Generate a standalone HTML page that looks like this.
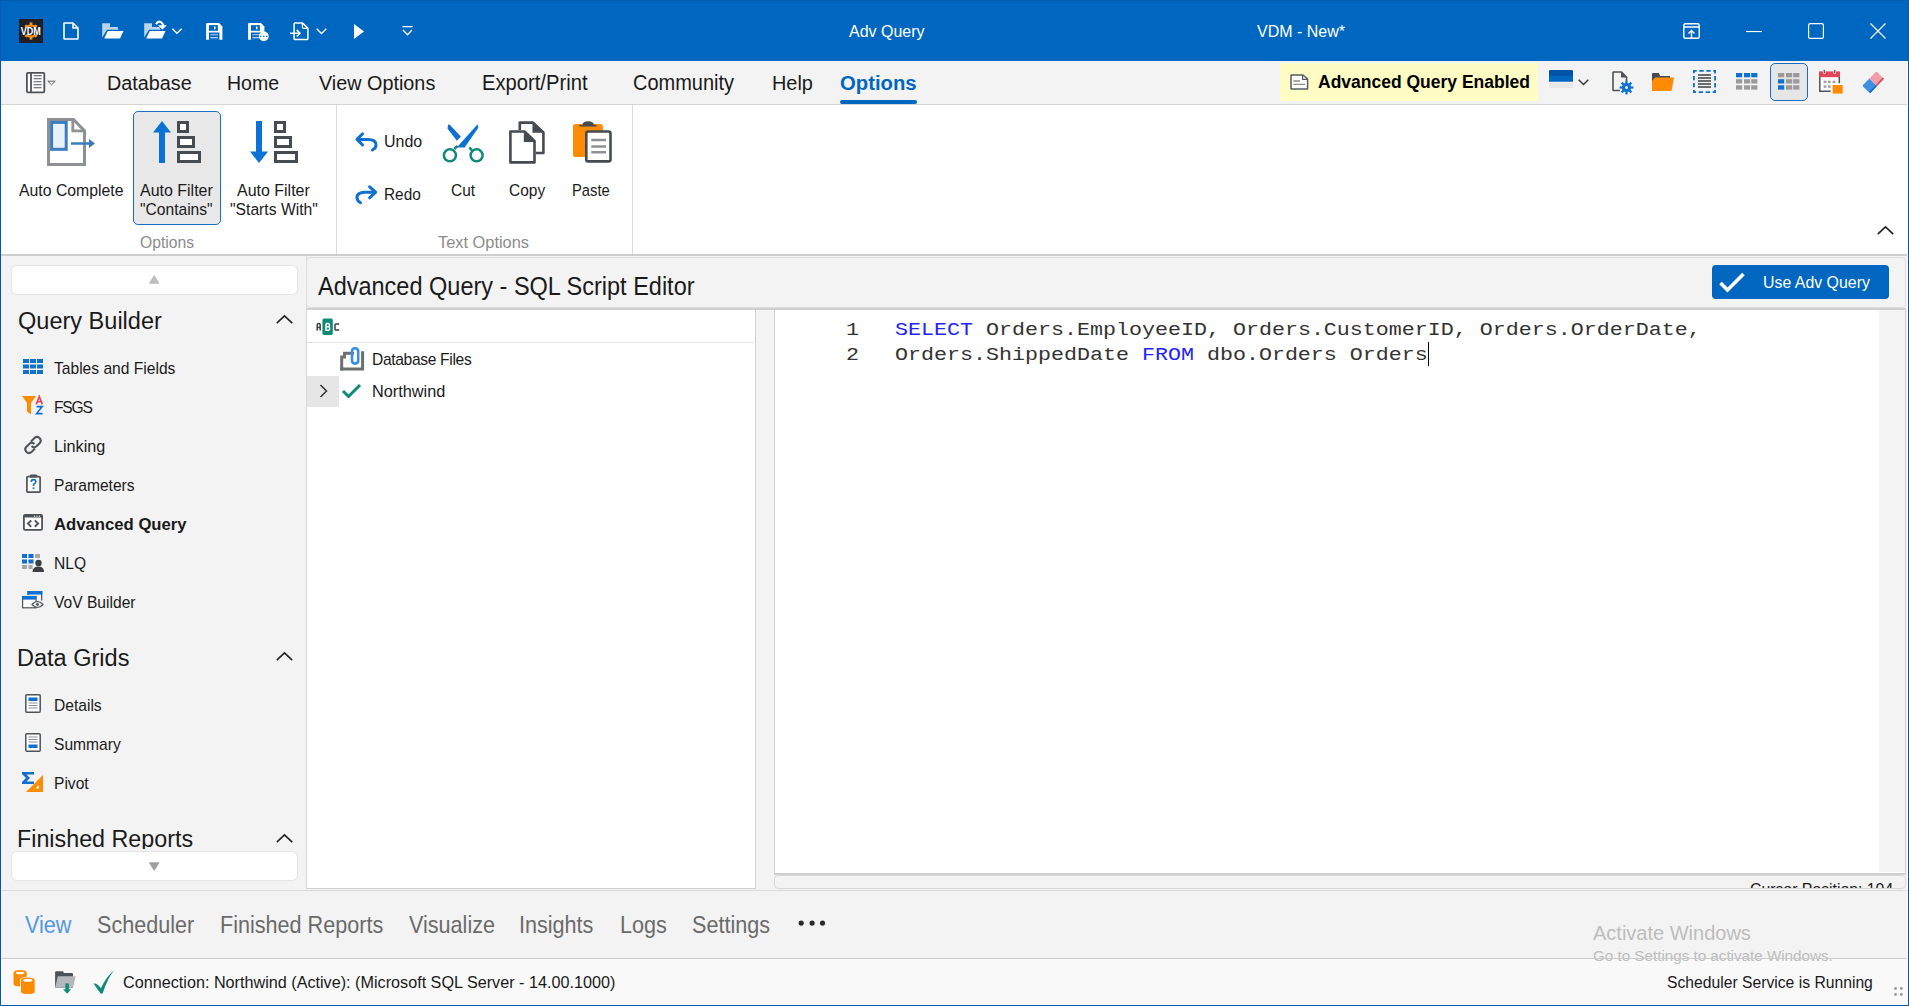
<!DOCTYPE html>
<html><head><meta charset="utf-8">
<style>
*{margin:0;padding:0;box-sizing:border-box}
html,body{width:1909px;height:1006px;overflow:hidden;background:#fff;font-family:"Liberation Sans",sans-serif;color:#1a1a1a}
.a{position:absolute}
.t{position:absolute;white-space:nowrap;line-height:1}
svg{position:absolute;overflow:visible}
#title{left:0;top:0;width:1909px;height:61px;background:#0067c0}
#tabs{left:1px;top:61px;width:1907px;height:44px;background:#f3f3f3;border-bottom:1px solid #d4d4d4}
#ribbon{left:1px;top:105px;width:1907px;height:149px;background:#fff}
#rbot{left:1px;top:254px;width:1907px;height:2px;background:#cfcfcf}
#main{left:1px;top:256px;width:1907px;height:634px;background:#f3f3f3}
#nav{left:1px;top:890px;width:1907px;height:68px;background:#f3f3f3;border-top:1px solid #d9d9d9}
#status{left:1px;top:958px;width:1907px;height:47px;background:#f9f9f9;border-top:1px solid #d9d9d9}
#lb{left:0;top:0;width:1px;height:1006px;background:#005bb0}
#tb{left:0;top:0;width:1909px;height:1px;background:#005bb0}
#rb{left:1908px;top:0;width:1px;height:1006px;background:#005bb0}
#bb{left:0;top:1005px;width:1909px;height:1px;background:#005bb0}
</style></head><body>
<div class="a" id="title"></div>
<div class="a" id="tabs"></div>
<div class="a" id="ribbon"></div>
<div class="a" id="rbot"></div>
<div class="a" id="main"></div>
<div class="a" id="nav"></div>
<div class="a" id="status"></div>

<!-- TITLE BAR -->
<svg style="left:19px;top:19px" width="24" height="24" viewBox="0 0 24 24">
<rect width="24" height="24" fill="#1f1f29"/>
<path d="M6.8 8.2 Q12 4.8 17.2 8.2" fill="none" stroke="#f7931e" stroke-width="2.2"/>
<path d="M6.8 15.8 Q12 19.2 17.2 15.8" fill="none" stroke="#f7931e" stroke-width="2.2"/>
<rect x="10.6" y="3.4" width="2.8" height="3" fill="#f7931e"/><rect x="10.6" y="17.6" width="2.8" height="3" fill="#f7931e"/>
<rect x="6" y="6" width="2.6" height="2.6" fill="#f7931e" transform="rotate(-30 7.3 7.3)"/><rect x="15.4" y="6" width="2.6" height="2.6" fill="#f7931e" transform="rotate(30 16.7 7.3)"/>
<rect x="6" y="15.4" width="2.6" height="2.6" fill="#f7931e" transform="rotate(30 7.3 16.7)"/><rect x="15.4" y="15.4" width="2.6" height="2.6" fill="#f7931e" transform="rotate(-30 16.7 16.7)"/>
<rect x="1" y="8.6" width="22" height="6.8" fill="#1f1f29"/>
<text x="1.8" y="15.7" font-family="Liberation Sans" font-weight="700" font-size="10.2" fill="#fff" textLength="20" lengthAdjust="spacingAndGlyphs">VDM</text>
</svg>
<svg style="left:63px;top:22px" width="16" height="18" viewBox="0 0 16 18"><path d="M1 1.5 Q1 1 1.5 1 H10 L15 6 V16.5 Q15 17 14.5 17 H1.5 Q1 17 1 16.5Z M10 1 V6 H15" fill="none" stroke="#fff" stroke-width="1.6" stroke-linejoin="round"/></svg>
<svg style="left:98px;top:15px" width="30" height="30" viewBox="0 0 30 30"><path d="M4.2 8.3 H12 V12 H19.5 L20.5 14.8 H9 L4.2 22.5Z" fill="#b9d4ee"/><path d="M9.8 16.1 H25.5 L22 23.6 H6.2Z" fill="#fff"/></svg>
<svg style="left:140px;top:15px" width="50" height="30" viewBox="0 0 50 30"><path d="M4.2 8.3 H12 V12 H19.5 L20.5 14.8 H9 L4.2 22.5Z" fill="#b9d4ee"/><path d="M9.8 16.1 H25.5 L22 23.6 H6.2Z" fill="#fff"/><path d="M16 9.2 Q19.5 4 23 9.5 V11" fill="none" stroke="#fff" stroke-width="2.3"/><path d="M17.9 10.3 H26.9 L22.4 14.5Z" fill="#fff"/><path d="M32.4 13.8 L37 18.2 L41.6 13.8" fill="none" stroke="#fff" stroke-width="1.4"/></svg>
<svg style="left:205px;top:23px" width="18" height="17" viewBox="0 0 18 17"><path d="M1.1 1.1 Q1.1 0.1 2.1 0.1 H14 L17.4 3.5 V16.8 H1.1Z" fill="#fff"/><rect x="4" y="2.1" width="8.9" height="5.7" fill="#0067c0"/><rect x="9.1" y="3.3" width="1.4" height="3.1" rx="0.7" fill="#fff"/><rect x="4" y="9.5" width="10.4" height="7.4" fill="#0067c0"/><path d="M5.4 11.7 H12.9 M5.4 14.6 H12.9" stroke="#b9d4ee" stroke-width="1.1"/></svg>
<svg style="left:247px;top:23px" width="24" height="20" viewBox="0 0 24 20"><path d="M1.1 1.1 Q1.1 0.1 2.1 0.1 H14 L17.4 3.5 V16.8 H1.1Z" fill="#fff"/><rect x="4" y="2.1" width="8.9" height="5.7" fill="#0067c0"/><rect x="9.1" y="3.3" width="1.4" height="3.1" rx="0.7" fill="#fff"/><rect x="4" y="9.5" width="10.4" height="7.4" fill="#0067c0"/><path d="M5.4 11.7 H12.9 M5.4 14.6 H12.9" stroke="#b9d4ee" stroke-width="1.1"/><circle cx="16.8" cy="13.3" r="4.9" fill="#fff"/><circle cx="13.8" cy="13.3" r="0.8" fill="#0067c0"/><circle cx="16.8" cy="13.3" r="0.8" fill="#0067c0"/><circle cx="19.8" cy="13.3" r="0.8" fill="#0067c0"/></svg>
<svg style="left:290px;top:22px" width="19" height="19" viewBox="0 0 19 19"><path d="M4.1 2 Q4.1 1 5 1 H12.6 L17.9 6.3 V16.8 Q17.9 17.6 17 17.6 H5 Q4.1 17.6 4.1 16.8Z" fill="none" stroke="#fff" stroke-width="1.5" stroke-linejoin="round"/><path d="M12.4 1.2 V5 Q12.4 6.4 13.8 6.4 H17.8" fill="none" stroke="#fff" stroke-width="1.2"/><path d="M0 11.2 H9.8 M6.7 7.9 L10 11.2 L6.7 14.6" fill="none" stroke="#fff" stroke-width="1.5"/></svg>
<svg style="left:316px;top:28px" width="11" height="7" viewBox="0 0 11 7"><path d="M0.7 0.7 L5.5 5.5 L10.3 0.7" fill="none" stroke="#fff" stroke-width="1.4"/></svg>
<svg style="left:354px;top:24px" width="10" height="15" viewBox="0 0 10 15"><path d="M0 0 L10 7.5 L0 15Z" fill="#fff"/></svg>
<svg style="left:402px;top:26px" width="11" height="10" viewBox="0 0 11 10"><path d="M0.5 0.7 H10.5 M1 4 L5.5 8.7 L10 4" fill="none" stroke="#fff" stroke-width="1.3"/></svg>
<div class="t" style="left:849px;top:24.2px;font-size:16.96px;color:#fff;transform:scaleX(0.9434);transform-origin:0 0;">Adv Query</div>
<div class="t" style="left:1257px;top:24.2px;font-size:16.96px;color:#fff;transform:scaleX(0.9434);transform-origin:0 0;">VDM - New*</div>
<svg style="left:1683px;top:23px" width="17" height="16" viewBox="0 0 17 16"><rect x="0.8" y="0.8" width="15.4" height="14.4" rx="1.5" fill="none" stroke="#fff" stroke-width="1.4"/><path d="M0.8 4 H16.2 M8.5 15 V8 M5.5 10.5 L8.5 7.5 L11.5 10.5" fill="none" stroke="#fff" stroke-width="1.4"/></svg>
<svg style="left:1746px;top:31px" width="16" height="2" viewBox="0 0 16 2"><rect width="16" height="1.1" y="0" fill="#fff"/></svg>
<svg style="left:1808px;top:23px" width="16" height="16" viewBox="0 0 16 16"><rect x="0.6" y="0.6" width="14.8" height="14.8" rx="1.6" fill="none" stroke="#fff" stroke-width="1.2"/></svg>
<svg style="left:1870px;top:23px" width="16" height="16" viewBox="0 0 16 16"><path d="M0.5 0.5 L15.5 15.5 M15.5 0.5 L0.5 15.5" stroke="#fff" stroke-width="1.2"/></svg>

<!-- TABS -->
<svg style="left:26px;top:72px" width="30" height="22" viewBox="0 0 30 22"><rect x="0.9" y="0.9" width="17.4" height="19.4" rx="1" fill="#fff" stroke="#4d5357" stroke-width="1.8"/><path d="M5 1 V20.3" stroke="#4d5357" stroke-width="1.8"/><path d="M7.6 3.8 H15.6 M7.6 6.8 H15.6 M7.6 9.8 H15.6 M7.6 12.8 H15.6 M7.6 15.8 H15.6" stroke="#4d5357" stroke-width="1.1"/><path d="M21.8 9.2 H29.2 L25.5 12.8Z" fill="none" stroke="#555" stroke-width="0.9" stroke-linejoin="round"/></svg>
<div class="t" style="left:107px;top:71.99px;font-size:20.99px;transform:scaleX(0.9434);transform-origin:0 0;">Database</div>
<div class="t" style="left:227px;top:72.7px;font-size:20.67px;transform:scaleX(0.9434);transform-origin:0 0;">Home</div>
<div class="t" style="left:319px;top:71.99px;font-size:20.99px;transform:scaleX(0.9434);transform-origin:0 0;">View Options</div>
<div class="t" style="left:482px;top:72.7px;font-size:21.41px;transform:scaleX(0.9434);transform-origin:0 0;">Export/Print</div>
<div class="t" style="left:633px;top:71.98px;font-size:21.20px;transform:scaleX(0.9434);transform-origin:0 0;">Community</div>
<div class="t" style="left:772px;top:71.99px;font-size:21.09px;transform:scaleX(0.9434);transform-origin:0 0;">Help</div>
<div class="t" style="left:840px;top:73px;font-size:20.3px;font-weight:700;color:#0067c0">Options</div>
<div class="a" style="left:840px;top:100px;width:77px;height:3.5px;border-radius:2px;background:#0067c0"></div>

<!-- TABS RIGHT -->
<div class="a" style="left:1280px;top:63px;width:258px;height:38px;background:#fffcc4"></div>
<svg style="left:1290px;top:74px" width="19" height="16" viewBox="0 0 19 16"><path d="M1 1.5 Q1 1 1.5 1 H13 L17.6 5 V14.5 Q17.6 15 17.1 15 H1.5 Q1 15 1 14.5Z" fill="#fff" stroke="#555b5f" stroke-width="1.5" stroke-linejoin="round"/><path d="M12.6 1.2 V5.4 H17.4" fill="none" stroke="#555b5f" stroke-width="1.2"/><path d="M3.3 7 H10 M3.3 10.3 H15" stroke="#8a8f92" stroke-width="1.3"/></svg>
<div class="t" style="left:1318px;top:74.00px;font-size:17.5px;font-weight:700;color:#000">Advanced Query Enabled</div>
<svg style="left:1549px;top:70px" width="24" height="18" viewBox="0 0 24 18"><path d="M0 1.5 Q0 0 1.5 0 H22.5 Q24 0 24 1.5 V11.8 H0Z" fill="#0067c0"/><path d="M0 1.5 Q0 0 1.5 0 H22.5 Q24 0 24 1.5 V5.8 H0Z" fill="#0054a6"/><rect y="13" width="24" height="5" fill="#e8e8e8"/></svg>
<svg style="left:1578px;top:79px" width="11" height="7" viewBox="0 0 11 7"><path d="M0.7 0.7 L5.5 5.5 L10.3 0.7" fill="none" stroke="#333" stroke-width="1.4"/></svg>
<svg style="left:1612px;top:71px" width="21" height="23" viewBox="0 0 21 23"><path d="M8 19.5 H1.5 Q1 19.5 1 19 V1.5 Q1 1 1.5 1 H9.5 L14.5 6 V10" fill="none" stroke="#4d5357" stroke-width="1.6" stroke-linejoin="round"/><path d="M9 1 V6.5 H14.5Z" fill="#4d5357"/><rect x="13.4" y="9.6" width="2.2" height="13.8" fill="#0e70d0" transform="rotate(0 14.5 16.5)"/><rect x="13.4" y="9.6" width="2.2" height="13.8" fill="#0e70d0" transform="rotate(45 14.5 16.5)"/><rect x="13.4" y="9.6" width="2.2" height="13.8" fill="#0e70d0" transform="rotate(90 14.5 16.5)"/><rect x="13.4" y="9.6" width="2.2" height="13.8" fill="#0e70d0" transform="rotate(135 14.5 16.5)"/><circle cx="14.5" cy="16.5" r="4.6" fill="#0e70d0"/><circle cx="14.5" cy="16.5" r="1.5" fill="#f3f3f3"/></svg>
<svg style="left:1652px;top:73px" width="22" height="18" viewBox="0 0 22 18"><path d="M0 1 Q0 0 1 0 H7 L8 3 H18 V8 H0Z" fill="#454b50"/><path d="M3 4.5 H22 L19.5 18 H0 V8Z" fill="#ff8c00"/></svg>
<svg style="left:1693px;top:70px" width="23" height="23" viewBox="0 0 23 23"><rect x="0.9" y="0.9" width="21.2" height="21.2" fill="none" stroke="#0e70d0" stroke-width="1.8" stroke-dasharray="4.4 2.6" stroke-dashoffset="1.6"/><path d="M5 5 H18 M5 8 H18 M5 11 H18 M5 14 H18 M5 17 H18" stroke="#3a4045" stroke-width="1.5"/></svg>
<svg style="left:1736px;top:73px" width="22" height="17" viewBox="0 0 22 17"><rect x="0" y="0" width="6.2" height="4.3" fill="#0e70d0"/><rect x="8" y="0" width="6.2" height="4.3" fill="#0e70d0"/><rect x="15.2" y="0" width="6.2" height="4.3" fill="#0e70d0"/><rect x="0" y="6.2" width="6.2" height="4.3" fill="#9a9a9a"/><rect x="8" y="6.2" width="6.2" height="4.3" fill="#9a9a9a"/><rect x="15.2" y="6.2" width="6.2" height="4.3" fill="#9a9a9a"/><rect x="0" y="12.3" width="6.2" height="4.3" fill="#9a9a9a"/><rect x="8" y="12.3" width="6.2" height="4.3" fill="#9a9a9a"/><rect x="15.2" y="12.3" width="6.2" height="4.3" fill="#9a9a9a"/></svg>
<div class="a" style="left:1770px;top:63px;width:38px;height:38px;border:1.5px solid #1a6fc4;border-radius:5px;background:#e6e6e6"></div>
<svg style="left:1778px;top:73px" width="22" height="17" viewBox="0 0 22 17"><rect x="0" y="0" width="6.2" height="4.3" fill="#9a9a9a"/><rect x="8" y="0" width="6.2" height="4.3" fill="#9a9a9a"/><rect x="15.2" y="0" width="6.2" height="4.3" fill="#9a9a9a"/><rect x="0" y="6.2" width="6.2" height="4.3" fill="#0e70d0"/><rect x="8" y="6.2" width="6.2" height="4.3" fill="#9a9a9a"/><rect x="15.2" y="6.2" width="6.2" height="4.3" fill="#9a9a9a"/><rect x="0" y="12.3" width="6.2" height="4.3" fill="#0e70d0"/><rect x="8" y="12.3" width="6.2" height="4.3" fill="#9a9a9a"/><rect x="15.2" y="12.3" width="6.2" height="4.3" fill="#9a9a9a"/></svg>
<svg style="left:1819px;top:70px" width="25" height="24" viewBox="0 0 25 24"><rect x="0.8" y="7" width="19.5" height="14.3" fill="#fff"/><path d="M0.8 7 V21.2 H11.6 M20.3 7 V13.2" fill="none" stroke="#4d5357" stroke-width="1.5"/><rect x="0" y="1.4" width="21" height="5.8" fill="#e0455a"/><rect x="4" y="0" width="2.4" height="3.6" fill="#fff"/><rect x="14.5" y="0" width="2.4" height="3.6" fill="#fff"/><rect x="4.6" y="-0.2" width="1.3" height="3.3" fill="#4d5357"/><rect x="15.1" y="-0.2" width="1.3" height="3.3" fill="#4d5357"/><g fill="#a0a0a0"><rect x="4.6" y="10.7" width="2.8" height="2.4"/><rect x="8.9" y="10.7" width="2.8" height="2.4"/><rect x="13.6" y="10.7" width="2.8" height="2.4"/><rect x="4.6" y="15.4" width="2.8" height="2.4"/><rect x="8.9" y="15.4" width="2.8" height="2.4"/></g><rect x="12.8" y="14.2" width="11" height="9.4" fill="#fff"/><rect x="13.6" y="15" width="10.1" height="8.6" fill="#ff8c00"/></svg>
<svg style="left:1862px;top:71px" width="23" height="23" viewBox="0 0 23 23"><path d="M1 14 Q0.3 14.7 1 15.4 L7.4 21.8 Q8.1 22.5 8.8 21.8 L15 15.1 L7.4 7.5Z" fill="#3d8fe0"/><path d="M7.4 7.5 L13.8 1 Q14.5 0.3 15.2 1 L21.4 7.2 Q22.1 7.9 21.4 8.6 L15 15.1Z" fill="#f0a0a8"/><path d="M22 7.8 L15 15.1 L13.8 13.9 L20.8 6.6Z" fill="#e0455a"/><path d="M15 15.1 L8.4 22 L7.2 20.8 L13.8 13.9Z" fill="#1a6fc4"/></svg>

<!-- RIBBON -->
<svg style="left:47px;top:118px" width="49" height="48" viewBox="0 0 49 48"><path d="M1.5 1.5 H26.5 L37.5 12.8 V46.5 H1.5Z" fill="#fff" stroke="#8d9194" stroke-width="3"/><path d="M25.8 1.5 V12.8 H37.5" fill="none" stroke="#8d9194" stroke-width="2.8"/><rect x="4.6" y="4.4" width="14.6" height="26.9" fill="#eaf1fb" stroke="#3b7bc0" stroke-width="3"/><path d="M24 25.5 H43" stroke="#3b7bc0" stroke-width="2.5"/><path d="M42 21 L48 25.5 L42 30Z" fill="#3b7bc0"/></svg>
<div class="t" style="left:19px;top:183.20px;font-size:16.75px;transform:scaleX(0.9434);transform-origin:0 0;">Auto Complete</div>
<div class="a" style="left:133px;top:111px;width:88px;height:114px;border:1.5px solid #1a6fc4;border-radius:5px;background:#e8e8e8"></div>
<svg style="left:153px;top:121px" width="49" height="42" viewBox="0 0 49 42"><path d="M9 0 L18 11.5 H12 V42 H6 V11.5 H0Z" fill="#0a72d4"/><rect x="25.5" y="1.5" width="9" height="9" fill="#fff" stroke="#454b50" stroke-width="3"/><rect x="25.5" y="16.5" width="15" height="9" fill="#fff" stroke="#454b50" stroke-width="3"/><rect x="25.5" y="31.5" width="21" height="9" fill="#fff" stroke="#454b50" stroke-width="3"/></svg>
<div class="t" style="left:140px;top:183.19px;font-size:16.96px;transform:scaleX(0.9434);transform-origin:0 0;">Auto Filter</div>
<div class="t" style="left:140px;top:202.21px;font-size:16.54px;transform:scaleX(0.9434);transform-origin:0 0;">"Contains"</div>
<svg style="left:250px;top:121px" width="49" height="42" viewBox="0 0 49 42"><path d="M9 42 L18 30.5 H12 V0 H6 V30.5 H0Z" fill="#0a72d4"/><rect x="25.5" y="1.5" width="9" height="9" fill="#fff" stroke="#454b50" stroke-width="3"/><rect x="25.5" y="16.5" width="15" height="9" fill="#fff" stroke="#454b50" stroke-width="3"/><rect x="25.5" y="31.5" width="21" height="9" fill="#fff" stroke="#454b50" stroke-width="3"/></svg>
<div class="t" style="left:237px;top:183.19px;font-size:16.96px;transform:scaleX(0.9434);transform-origin:0 0;">Auto Filter</div>
<div class="t" style="left:230px;top:202.20px;font-size:16.64px;transform:scaleX(0.9434);transform-origin:0 0;">"Starts With"</div>
<div class="t" style="left:140px;top:235.20px;font-size:16.64px;color:#8c8c8c;transform:scaleX(0.9434);transform-origin:0 0;">Options</div>
<div class="a" style="left:336px;top:105px;width:1px;height:149px;background:#dadada"></div>
<svg style="left:355px;top:132px" width="23" height="20" viewBox="0 0 23 20"><path d="M3 7.4 H13 Q21 7.4 21 13 Q21 16.2 17.5 18" fill="none" stroke="#0e70d0" stroke-width="3" stroke-linecap="round"/><path d="M7.6 1.8 L2 7.4 L7.6 13" fill="none" stroke="#0e70d0" stroke-width="3" stroke-linecap="round" stroke-linejoin="round"/></svg>
<div class="t" style="left:384px;top:134.19px;font-size:16.96px;transform:scaleX(0.9434);transform-origin:0 0;">Undo</div>
<svg style="left:355px;top:185px" width="23" height="20" viewBox="0 0 23 20"><path d="M20 7.2 H10 Q2 7.2 2 12.5 Q2 15.8 5.5 17.8" fill="none" stroke="#0e70d0" stroke-width="3" stroke-linecap="round"/><path d="M14.6 1.8 L20.6 7.2 L14.6 12.8" fill="none" stroke="#0e70d0" stroke-width="3" stroke-linecap="round" stroke-linejoin="round"/></svg>
<div class="t" style="left:384px;top:186.22px;font-size:16.32px;transform:scaleX(0.9434);transform-origin:0 0;">Redo</div>
<svg style="left:442px;top:124px" width="43" height="40" viewBox="0 0 43 40"><path d="M5.8 2 Q6.3 0.2 7.5 0.6 L18.9 12.5 L14.9 16.7 L5.6 4.8Z" fill="#0e70d0"/><path d="M35.4 0.4 Q36.6 1.8 36.2 4.1 L22.6 23.5 H14.7Z" fill="#0e70d0"/><path d="M12.2 25 L15.6 21.8 M27.3 23.3 L30 26.3" stroke="#0e8a77" stroke-width="2.5"/><circle cx="7.9" cy="31.3" r="6" fill="none" stroke="#0e8a77" stroke-width="2.5"/><circle cx="34.6" cy="31.3" r="6" fill="none" stroke="#0e8a77" stroke-width="2.5"/></svg>
<div class="t" style="left:451px;top:182.21px;font-size:16.43px;transform:scaleX(0.9434);transform-origin:0 0;">Cut</div>
<svg style="left:509px;top:120px" width="37" height="44" viewBox="0 0 37 44"><path d="M10.8 10 V2.6 H24 L34.4 12.5 V33 H27" fill="#fff" stroke="#454b50" stroke-width="2.6" stroke-linejoin="round"/><path d="M23.5 1.5 V12.8 H35.5Z" fill="#454b50"/><path d="M1.4 11.5 H15.5 L25.5 21 V42.4 H1.4Z" fill="#fff" stroke="#454b50" stroke-width="2.6" stroke-linejoin="round"/><path d="M14.8 10.5 V22 H26.5Z" fill="#454b50"/></svg>
<div class="t" style="left:509px;top:182.21px;font-size:16.43px;transform:scaleX(0.9434);transform-origin:0 0;">Copy</div>
<svg style="left:572px;top:120px" width="41" height="44" viewBox="0 0 41 44"><rect x="1" y="3.9" width="29.9" height="33" rx="2.5" fill="#ff8c00"/><path d="M7.3 6.5 H24.6 V5 H22 Q21.5 1.3 16.2 1.3 Q10.9 1.3 10.4 5 H7.3Z" fill="#454b50"/><rect x="14.3" y="11.5" width="24.2" height="29.9" rx="2" fill="#fff" stroke="#454b50" stroke-width="2.6"/><path d="M19.3 20.1 H34 M19.3 26.4 H34 M19.3 32.2 H34" stroke="#8d9194" stroke-width="2.5"/></svg>
<div class="t" style="left:572px;top:181.6px;font-size:16.43px;transform:scaleX(0.90);transform-origin:0 0;">Paste</div>
<div class="t" style="left:438px;top:235.19px;font-size:16.96px;color:#8c8c8c;transform:scaleX(0.9665);transform-origin:0 0;">Text Options</div>
<div class="a" style="left:632px;top:105px;width:1px;height:149px;background:#dadada"></div>
<svg style="left:1877px;top:226px" width="17" height="9" viewBox="0 0 17 9"><path d="M0.8 8.2 L8.5 0.8 L16.2 8.2" fill="none" stroke="#222" stroke-width="1.6"/></svg>
<!-- LEFT PANEL -->
<div class="a" style="left:306px;top:256px;width:1px;height:633px;background:#d9d9d9"></div>
<div class="a" style="left:12px;top:266px;width:285px;height:28px;background:#fff;border-radius:5px;box-shadow:0 0 0 1px #e6e6e6"></div>
<svg style="left:149px;top:275px" width="11" height="9" viewBox="0 0 11 9"><path d="M5.2 1 L9.6 8 H0.8Z" fill="#bdbdbd" stroke="#bdbdbd" stroke-width="1.3" stroke-linejoin="round"/></svg>
<div class="t" style="left:18px;top:308.72px;font-size:24.70px;transform:scaleX(0.953);transform-origin:0 0;">Query Builder</div>
<svg style="left:276px;top:315px" width="17" height="9" viewBox="0 0 17 9"><path d="M0.8 8.2 L8.5 0.8 L16.2 8.2" fill="none" stroke="#222" stroke-width="1.6"/></svg>
<div class="t" style="left:54px;top:361.41px;font-size:16.54px;transform:scaleX(0.9434);transform-origin:0 0;">Tables and Fields</div>
<div class="t" style="left:54px;top:399.81px;font-size:16.54px;letter-spacing:-1.3px;transform:scaleX(0.9434);transform-origin:0 0;">FSGS</div>
<div class="t" style="left:54px;top:437.78px;font-size:17.17px;transform:scaleX(0.9434);transform-origin:0 0;">Linking</div>
<div class="t" style="left:54px;top:477.61px;font-size:16.54px;transform:scaleX(0.9434);transform-origin:0 0;">Parameters</div>
<div class="t" style="left:54px;top:517.20px;font-size:16.7px;font-weight:700;">Advanced Query</div>
<div class="t" style="left:54px;top:556.11px;font-size:16.54px;transform:scaleX(0.9434);transform-origin:0 0;">NLQ</div>
<div class="t" style="left:54px;top:594.91px;font-size:16.54px;transform:scaleX(0.9434);transform-origin:0 0;">VoV Builder</div>
<div class="t" style="left:17px;top:645.52px;font-size:24.70px;transform:scaleX(0.953);transform-origin:0 0;">Data Grids</div>
<svg style="left:276px;top:652px" width="17" height="9" viewBox="0 0 17 9"><path d="M0.8 8.2 L8.5 0.8 L16.2 8.2" fill="none" stroke="#222" stroke-width="1.6"/></svg>
<div class="t" style="left:54px;top:698.41px;font-size:16.54px;transform:scaleX(0.9434);transform-origin:0 0;">Details</div>
<div class="t" style="left:54px;top:737.41px;font-size:16.54px;transform:scaleX(0.9434);transform-origin:0 0;">Summary</div>
<div class="t" style="left:54px;top:776.41px;font-size:16.54px;transform:scaleX(0.9434);transform-origin:0 0;">Pivot</div>
<div class="a" style="left:0;top:820px;width:306px;height:29px;overflow:hidden"><div class="t" style="left:17px;top:6.72px;font-size:24.70px;transform:scaleX(0.9434);transform-origin:0 0;">Finished Reports</div>
<svg style="left:276px;top:14px" width="17" height="9" viewBox="0 0 17 9"><path d="M0.8 8.2 L8.5 0.8 L16.2 8.2" fill="none" stroke="#222" stroke-width="1.6"/></svg>
</div>
<div class="a" style="left:12px;top:852px;width:285px;height:28px;background:#fff;border-radius:5px;box-shadow:0 0 0 1px #e6e6e6"></div>
<svg style="left:149px;top:862px" width="11" height="9" viewBox="0 0 11 9"><path d="M0.8 1 H9.6 L5.2 8Z" fill="#a0a0a0" stroke="#a0a0a0" stroke-width="1.3" stroke-linejoin="round"/></svg>
<svg style="left:23px;top:359px" width="20" height="15" viewBox="0 0 20 15"><g fill="#0e70d0"><rect x="0" y="0" width="6" height="4"/><rect x="7" y="0" width="6" height="4"/><rect x="14" y="0" width="6" height="4"/><rect x="0" y="5.5" width="6" height="4"/><rect x="7" y="5.5" width="6" height="4"/><rect x="14" y="5.5" width="6" height="4"/><rect x="0" y="11" width="6" height="4"/><rect x="7" y="11" width="6" height="4"/><rect x="14" y="11" width="6" height="4"/></g></svg>
<svg style="left:22px;top:396px" width="22" height="19" viewBox="0 0 22 19"><path d="M0 0 H14 L9 7 V18.5 L5 15.5 V7Z" fill="#ff8c00"/><path d="M14.3 8.4 L17.3 0.6 L20.3 8.4 M15.3 5.8 H19.3" fill="none" stroke="#e0455a" stroke-width="1.6"/><path d="M14.6 10.6 H20.2 L14.6 17.6 H20.6" fill="none" stroke="#0e70d0" stroke-width="1.6"/></svg>
<svg style="left:23px;top:435px" width="20" height="20" viewBox="0 0 20 20"><g fill="none" stroke="#4d5357" stroke-width="2"><path d="M8 6.5 L11.5 3 Q14 0.8 16.5 3 Q19 5.5 16.8 8 L13.5 11.3 Q11 13.5 8.5 11"/><path d="M12 13.5 L8.5 17 Q6 19.2 3.5 17 Q1 14.5 3.2 12 L6.5 8.7 Q9 6.5 11.5 9"/></g></svg>
<svg style="left:26px;top:474px" width="15" height="19" viewBox="0 0 15 19"><rect x="0.9" y="2.6" width="13.2" height="15.6" rx="1" fill="#fff" stroke="#4d5357" stroke-width="1.7"/><rect x="3.8" y="0.4" width="7.4" height="3.2" rx="1.2" fill="#4d5357"/><path d="M5.2 8 Q5.2 5.6 7.5 5.6 Q9.8 5.6 9.8 7.8 Q9.8 9.3 7.6 10.4 V12" fill="none" stroke="#0e70d0" stroke-width="1.6"/><rect x="6.7" y="13.3" width="1.8" height="1.8" fill="#0e70d0"/></svg>
<svg style="left:23px;top:514px" width="20" height="17" viewBox="0 0 20 17"><rect x="0.9" y="0.9" width="18.2" height="15" rx="1.2" fill="#fff" stroke="#4d5357" stroke-width="1.8"/><rect x="0.9" y="0.9" width="18.2" height="2.6" fill="#4d5357"/><circle cx="11.5" cy="2.2" r="0.6" fill="#fff"/><circle cx="14" cy="2.2" r="0.6" fill="#fff"/><circle cx="16.5" cy="2.2" r="0.6" fill="#fff"/><path d="M8.2 6.4 L5 9.6 L8.2 12.8 M11.8 6.4 L15 9.6 L11.8 12.8" fill="none" stroke="#4d5357" stroke-width="2"/></svg>
<svg style="left:22px;top:554px" width="22" height="18" viewBox="0 0 22 18"><g fill="#0e70d0"><rect x="0" y="0" width="5" height="4"/><rect x="6.5" y="0" width="5" height="4"/><rect x="0" y="5.5" width="5" height="4"/><rect x="6.5" y="5.5" width="5" height="4"/></g><g fill="#a8a8a8"><rect x="13" y="0" width="5" height="4"/><rect x="0" y="11" width="5" height="4"/><rect x="6.5" y="11" width="4" height="4"/></g><circle cx="16.5" cy="9" r="3.2" fill="#3a4045"/><path d="M10.5 18 Q10.5 12.5 16.5 12.5 Q22 12.5 22 18Z" fill="#3a4045"/></svg>
<svg style="left:22px;top:591px" width="22" height="19" viewBox="0 0 22 19"><path d="M6 4 V0.6 H19.7 V9.5" fill="none" stroke="#4d5357" stroke-width="1.2"/><rect x="5.5" y="0" width="14.8" height="3.6" fill="#0e70d0"/><rect x="0.6" y="5.6" width="13.5" height="11.2" fill="#fff" stroke="#4d5357" stroke-width="1.2"/><rect x="0" y="5" width="14" height="3.6" fill="#0e70d0"/><path d="M10 13.5 Q15.5 7.5 21 13.5 Q15.5 19.5 10 13.5Z" fill="#f3f3f3" stroke="#4d5357" stroke-width="1.2"/><circle cx="15.5" cy="13.5" r="1.4" fill="#4d5357"/></svg>
<svg style="left:25px;top:694px" width="16" height="19" viewBox="0 0 16 19"><rect x="0.8" y="0.8" width="14.4" height="17.4" rx="1" fill="#fff" stroke="#4d5357" stroke-width="1.5"/><rect x="3.5" y="3.5" width="9" height="3.5" fill="#0e70d0"/><path d="M3.5 9 H12.5 M3.5 11.5 H12.5 M3.5 14 H12.5" stroke="#8d9194" stroke-width="1.2"/></svg>
<svg style="left:25px;top:733px" width="16" height="19" viewBox="0 0 16 19"><rect x="0.8" y="0.8" width="14.4" height="17.4" rx="1" fill="#fff" stroke="#4d5357" stroke-width="1.5"/><rect x="3.5" y="11.5" width="9" height="3.5" fill="#0e70d0"/><path d="M3.5 4 H12.5 M3.5 6.5 H12.5 M3.5 9 H12.5" stroke="#8d9194" stroke-width="1.2"/></svg>
<svg style="left:22px;top:772px" width="21" height="20" viewBox="0 0 21 20"><path d="M0 0 H12 V2.5 H4.5 L8 6 L4.5 9.5 H12 V12 H0 V10 L4 6 L0 2Z" fill="#0e70d0"/><path d="M21 3 V20 H4Z" fill="#ff8c00"/><path d="M17 13 V16.5 H13.5Z" fill="#fff"/></svg>
<!-- CENTER -->
<div class="a" style="left:306px;top:257px;width:1600px;height:51px;background:#f3f3f3;border:1px solid #dedede;border-radius:4px"></div>
<div class="t" style="left:318px;top:273.51px;font-size:24.91px;transform:scaleX(0.9434);transform-origin:0 0;">Advanced Query - SQL Script Editor</div>
<div class="a" style="left:1712px;top:265px;width:177px;height:34px;background:#0067c0;border-radius:4px"></div>
<svg style="left:1719px;top:272px" width="26" height="21" viewBox="0 0 26 21"><path d="M1.5 11 L8.5 18 L24.5 2" fill="none" stroke="#fff" stroke-width="3.6"/></svg>
<div class="t" style="left:1763px;top:275.19px;font-size:16.85px;color:#fff;transform:scaleX(0.9434);transform-origin:0 0;">Use Adv Query</div>
<div class="a" style="left:306px;top:308px;width:450px;height:581px;background:#fff;border-top:2px solid #cfcfcf;border-left:1px solid #d9d9d9;border-right:1px solid #d0d0d0;border-bottom:1px solid #d0d0d0"></div>
<div class="a" style="left:307px;top:342px;width:447px;height:1px;background:#e3e3e3"></div>
<svg style="left:316px;top:318px" width="24" height="18" viewBox="0 0 24 18"><rect x="6.4" y="0.4" width="10.4" height="16.5" rx="1.6" fill="#0e8a77"/><path d="M1.2 12.4 V7 Q1.2 5.6 2.7 5.6 Q4.2 5.6 4.2 7 V12.4 M1.2 9.4 H4.2" fill="none" stroke="#3a4045" stroke-width="1.5"/><path d="M10 5.6 V12.2 H12.4 Q13.7 12.2 13.7 10.5 Q13.7 8.8 12.2 8.8 H10 M10 5.6 H12.1 Q13.4 5.6 13.4 7.2 Q13.4 8.8 12.2 8.8" fill="none" stroke="#fff" stroke-width="1.5"/><path d="M23.2 5.9 H19.9 Q19 5.9 19 6.9 V11.2 Q19 12.1 19.9 12.1 H23.2" fill="none" stroke="#3a4045" stroke-width="1.5"/></svg>
<svg style="left:340px;top:347px" width="25" height="25" viewBox="0 0 25 25"><path d="M1.7 23.6 V10 H4.5 V6.3 H14" fill="none" stroke="#6b6f72" stroke-width="3"/><path d="M0.2 22.1 H24 M22.6 23.6 V4.3" fill="none" stroke="#6b6f72" stroke-width="3"/><path d="M12 14 V4.4 Q12 1.2 15.1 1.2 Q18.2 1.2 18.2 4.4 V13.6 Q18.2 16.6 15.1 16.6 Q12 16.6 12 13.6 V8" fill="none" stroke="#3a8ee6" stroke-width="2.6"/></svg>
<div class="t" style="left:372px;top:351.51px;font-size:16.54px;letter-spacing:-0.35px;transform:scaleX(0.9434);transform-origin:0 0;">Database Files</div>
<div class="a" style="left:307px;top:376px;width:32px;height:31px;background:#e6e6e6"></div>
<svg style="left:319px;top:384px" width="9" height="14" viewBox="0 0 9 14"><path d="M1.5 1 L7.5 7 L1.5 13" fill="none" stroke="#333" stroke-width="1.5"/></svg>
<svg style="left:342px;top:384px" width="19" height="14" viewBox="0 0 19 14"><path d="M1 7 L6.5 12.5 L18 1" fill="none" stroke="#0e8a77" stroke-width="3"/></svg>
<div class="t" style="left:372px;top:382.57px;font-size:17.28px;transform:scaleX(0.9434);transform-origin:0 0;">Northwind</div>
<!-- EDITOR -->
<div class="a" style="left:755px;top:308px;width:19px;height:2px;background:#cfcfcf"></div>
<div class="a" style="left:774px;top:308px;width:1132px;height:567px;background:#fff;border-top:2px solid #cfcfcf;border-left:1px solid #d0d0d0;border-right:1px solid #d0d0d0;border-bottom:2px solid #cfcfcf"></div>
<div class="a" style="left:1879px;top:310px;width:26px;height:562px;background:#f3f3f3"></div>
<div class="a" style="left:774px;top:875px;width:1132px;height:14px;background:#f3f3f3;border:1px solid #d9d9d9;border-radius:4px;overflow:hidden">
<div class="t" style="left:975px;top:5.5px;font-size:16.75px;transform:scaleX(0.9434);transform-origin:0 0;">Cursor Position: 104</div></div>
<div class="t" style="left:846px;top:318.7px;font-size:21.67px;font-family:'Liberation Mono',monospace;color:#333;transform:scaleY(0.87);transform-origin:0 16.3px">1</div>
<div class="t" style="left:846px;top:343.5px;font-size:21.67px;font-family:'Liberation Mono',monospace;color:#333;transform:scaleY(0.87);transform-origin:0 16.3px">2</div>
<div class="t" style="left:895px;top:318.7px;font-size:21.67px;font-family:'Liberation Mono',monospace;color:#333;transform:scaleY(0.87);transform-origin:0 16.3px"><span style="color:#2323ff">SELECT</span> Orders.EmployeeID, Orders.CustomerID, Orders.OrderDate,</div>
<div class="t" style="left:895px;top:343.5px;font-size:21.67px;font-family:'Liberation Mono',monospace;color:#333;transform:scaleY(0.87);transform-origin:0 16.3px">Orders.ShippedDate <span style="color:#2323ff">FROM</span> dbo.Orders Orders</div>
<div class="a" style="left:1428px;top:342px;width:1px;height:24px;background:#000"></div>
<!-- NAV -->
<div class="t" style="left:25px;top:912.96px;font-size:24.6px;color:#5298e4;transform:scaleX(0.878);transform-origin:0 0;">View</div>
<div class="t" style="left:97px;top:912.96px;font-size:24.6px;color:#6a6a6a;transform:scaleX(0.878);transform-origin:0 0;">Scheduler</div>
<div class="t" style="left:220px;top:912.96px;font-size:24.6px;color:#6a6a6a;transform:scaleX(0.878);transform-origin:0 0;">Finished Reports</div>
<div class="t" style="left:409px;top:912.96px;font-size:24.6px;color:#6a6a6a;transform:scaleX(0.878);transform-origin:0 0;">Visualize</div>
<div class="t" style="left:519px;top:912.96px;font-size:24.6px;color:#6a6a6a;transform:scaleX(0.878);transform-origin:0 0;">Insights</div>
<div class="t" style="left:620px;top:912.96px;font-size:24.6px;color:#6a6a6a;transform:scaleX(0.878);transform-origin:0 0;">Logs</div>
<div class="t" style="left:692px;top:912.96px;font-size:24.6px;color:#6a6a6a;transform:scaleX(0.878);transform-origin:0 0;">Settings</div>
<svg style="left:798px;top:920px" width="29" height="6" viewBox="0 0 29 6"><circle cx="3.2" cy="3.1" r="2.6" fill="#2a2a2a"/><circle cx="14.1" cy="3.1" r="2.6" fill="#2a2a2a"/><circle cx="24.5" cy="3.1" r="2.6" fill="#2a2a2a"/></svg>
<div class="t" style="left:1593px;top:922.8px;font-size:20px;color:#bdbdbd;">Activate Windows</div>
<div class="t" style="left:1593px;top:948.2px;font-size:15.2px;color:#bdbdbd;">Go to Settings to activate Windows.</div>
<div class="a" style="left:1px;top:958px;width:1907px;height:1px;background:rgba(200,200,200,0.8)"></div>
<!-- STATUS -->
<svg style="left:13px;top:970px" width="23" height="25" viewBox="0 0 23 25"><path d="M0.5 3 Q0.5 0 7.15 0 Q13.8 0 13.8 3 V14 Q13.8 16.5 7.15 16.5 Q0.5 16.5 0.5 14Z" fill="#ff8c00"/><ellipse cx="7.15" cy="3" rx="4.3" ry="1.3" fill="#fff"/><path d="M7 10.4 Q7 6.8 14.85 6.8 Q22.7 6.8 22.7 10.4 V21.6 Q22.7 25 14.85 25 Q7 25 7 21.6Z" fill="#fafafa"/><path d="M8 10.4 Q8 7.6 14.85 7.6 Q21.7 7.6 21.7 10.4 V21.4 Q21.7 24 14.85 24 Q8 24 8 21.4Z" fill="#ff8c00"/><ellipse cx="14.85" cy="10.4" rx="4.6" ry="1.4" fill="#fff"/></svg>
<svg style="left:55px;top:971px" width="22" height="24" viewBox="0 0 22 24"><path d="M0.1 1.3 Q0.1 0.3 1.2 0.3 H8 L9 2 H17 Q18 2 18 3 V16.7 H0.1Z" fill="#4d5357"/><path d="M2.8 5.2 H20.7 L18 16.7 H0.1Z" fill="#b4b8bb"/><path d="M12.1 12.4 V19" stroke="#0e8a77" stroke-width="3.4"/><path d="M8 18.2 H16.2 L12.1 22.8Z" fill="#0e8a77"/></svg>
<svg style="left:93px;top:970px" width="22" height="25" viewBox="0 0 22 25"><path d="M0.5 13.5 Q4.2 12.8 7.9 18.3 Q12.8 7 21.2 0.2 Q14.6 8 9.9 22.8 Q8.7 24.6 7.2 23 Z" fill="#0e8a77"/></svg>
<div class="t" style="left:123px;top:973.78px;font-size:17.17px;transform:scaleX(0.9434);transform-origin:0 0;">Connection: Northwind (Active): (Microsoft SQL Server - 14.00.1000)</div>
<div class="t" style="left:1667px;top:974.01px;font-size:16.43px;transform:scaleX(0.9555);transform-origin:0 0;">Scheduler Service is Running</div>
<svg style="left:1893px;top:986px" width="11" height="11" viewBox="0 0 11 11"><g fill="#999"><circle cx="2.5" cy="2.5" r="1.4"/><circle cx="8.4" cy="2.5" r="1.4"/><circle cx="2.5" cy="8.5" r="1.4"/><circle cx="8.4" cy="8.5" r="1.4"/></g></svg>
<div class="a" id="lb"></div>
<div class="a" id="rb"></div>
<div class="a" id="bb"></div>
<div class="a" id="tb"></div>
<div class="a" style="left:1907px;top:61px;width:1px;height:944px;background:#fff"></div>
<div class="a" style="left:1px;top:1004px;width:1907px;height:1px;background:#fff"></div>
</body></html>
